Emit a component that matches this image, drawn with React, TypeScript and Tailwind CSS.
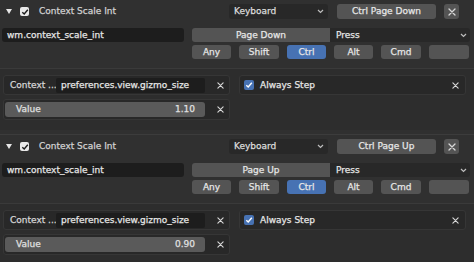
import React from "react";

function Tri() {
  return (
    <svg width="6" height="5" viewBox="0 0 6 5" className="shrink-0">
      <path d="M0 0 L6 0 L3 5 Z" fill="#e6e6e6" />
    </svg>
  );
}

function XIcon({ size = 8 }: { size?: number }) {
  return (
    <svg width={size} height={size} viewBox="0 0 8 8">
      <path d="M1 1 L7 7 M7 1 L1 7" stroke="#d8d8d8" strokeWidth="1.3" strokeLinecap="round" />
    </svg>
  );
}

function Chevron() {
  return (
    <svg width="7" height="5" viewBox="0 0 7 5">
      <path d="M1 1 L3.5 3.5 L6 1" stroke="#bdbdbd" strokeWidth="1.2" fill="none" />
    </svg>
  );
}

function Check({ blue }: { blue?: boolean }) {
  return (
    <div
      className={`flex items-center justify-center rounded-[2px] ${
        blue ? "w-[10px] h-[10px] bg-[#4772b3]" : "w-[9px] h-[9px] bg-[#e8e8e8]"
      }`}
    >
      <svg width="8" height="8" viewBox="0 0 8 8">
        <path
          d="M1.3 4.2 L3.2 6 L6.8 1.8"
          stroke={blue ? "#ffffff" : "#1a1a1a"}
          strokeWidth="1.4"
          fill="none"
        />
      </svg>
    </div>
  );
}

function Btn({ children, active, className = "" }: { children?: React.ReactNode; active?: boolean; className?: string }) {
  return (
    <div
      className={`rounded-[3px] flex items-center justify-center text-[#e6e6e6] ${
        active ? "bg-[#4772b3]" : "bg-[#545454]"
      } ${className}`}
    >
      {children}
    </div>
  );
}

function Block({ keyName, shortcut, value }: { keyName: string; shortcut: string; value: string }) {
  return (
    <div className="h-[131px] border-b border-[#3c3c3c]">
      {/* header */}
      <div className="flex items-center h-[15px] mt-[4px]">
        <div className="w-[20px] pl-[6px] flex items-center">
          <Tri />
        </div>
        <Check />
        <span className="ml-[10px] text-[#d2d2d2] w-[190px]">Context Scale Int</span>
        <div className="w-[99px] h-[15px] rounded-[3px] bg-[#282828] flex items-center justify-between pl-[5px] pr-[4px] text-[#dcdcdc]">
          <span>Keyboard</span>
          <Chevron />
        </div>
        <Btn className="w-[99px] h-[15px] ml-[9px]">{shortcut}</Btn>
        <Btn className="w-[15px] h-[15px] ml-[8px]">
          <XIcon />
        </Btn>
      </div>

      {/* key row */}
      <div className="flex items-center h-[14px] mt-[9px]">
        <div className="ml-[2px] w-[182px] h-[14px] rounded-[3px] bg-[#1d1d1d] flex items-center pl-[5px] text-[#e6e6e6]">
          wm.context_scale_int
        </div>
        <div className="ml-[8px] w-[138px] h-[14px] rounded-l-[3px] bg-[#545454] flex items-center justify-center text-[#e6e6e6]">
          {keyName}
        </div>
        <div className="w-[140px] h-[14px] rounded-r-[3px] bg-[#282828] flex items-center justify-between pl-[6px] pr-[3px] text-[#e6e6e6]">
          <span>Press</span>
          <Chevron />
        </div>
      </div>

      {/* modifiers */}
      <div className="flex items-center ml-[192px] gap-[8px] mt-[3px]">
        <Btn className="w-[39px] h-[14px]">Any</Btn>
        <Btn className="w-[40px] h-[14px]">Shift</Btn>
        <Btn className="w-[39px] h-[14px]" active>Ctrl</Btn>
        <Btn className="w-[39px] h-[14px]">Alt</Btn>
        <Btn className="w-[40px] h-[14px]">Cmd</Btn>
        <Btn className="w-[40px] h-[14px]" />
      </div>

      {/* properties */}
      <div className="mt-[9px] border-t border-[#3a3a3a] bg-[#2d2d2d] h-[62px] pt-[6px] flex">
        <div className="ml-[3px] w-[227px] flex flex-col gap-[4px]">
          <div className="h-[20px] rounded-[3px] bg-[#282828] border border-[#363636] flex items-center">
            <span className="ml-[6px] w-[45px] text-[#d6d6d6] whitespace-nowrap">Context ...</span>
            <div className="ml-[1px] w-[149px] h-[15px] rounded-[2px] bg-[#1d1d1d] flex items-center pl-[5px] text-[#e6e6e6]">
              preferences.view.gizmo_size
            </div>
            <div className="ml-[12px]">
              <XIcon size={7} />
            </div>
          </div>
          <div className="h-[21px] rounded-[3px] bg-[#282828] border border-[#363636] flex items-center">
            <div className="ml-[1px] w-[200px] h-[15px] rounded-[3px] bg-[#5a5a5a] flex items-center justify-between pl-[11px] pr-[10px] text-[#e0e0e0]">
              <span>Value</span>
              <span>{value}</span>
            </div>
            <div className="ml-[12px]">
              <XIcon size={7} />
            </div>
          </div>
        </div>
        <div className="ml-[9px] w-[227px]">
          <div className="h-[20px] rounded-[3px] bg-[#282828] border border-[#363636] flex items-center">
            <div className="ml-[4px]">
              <Check blue />
            </div>
            <span className="ml-[6px] text-[#e6e6e6]">Always Step</span>
            <div className="ml-auto mr-[6px]">
              <XIcon size={7} />
            </div>
          </div>
        </div>
      </div>
    </div>
  );
}

export default function App() {
  return (
    <div className="w-[474px] h-[262px] overflow-hidden bg-[#303030] text-[9px] leading-none font-['DejaVu_Sans',sans-serif] [-webkit-text-stroke:0.25px]">
      <Block keyName="Page Down" shortcut="Ctrl Page Down" value="1.10" />
      <Block keyName="Page Up" shortcut="Ctrl Page Up" value="0.90" />
    </div>
  );
}
